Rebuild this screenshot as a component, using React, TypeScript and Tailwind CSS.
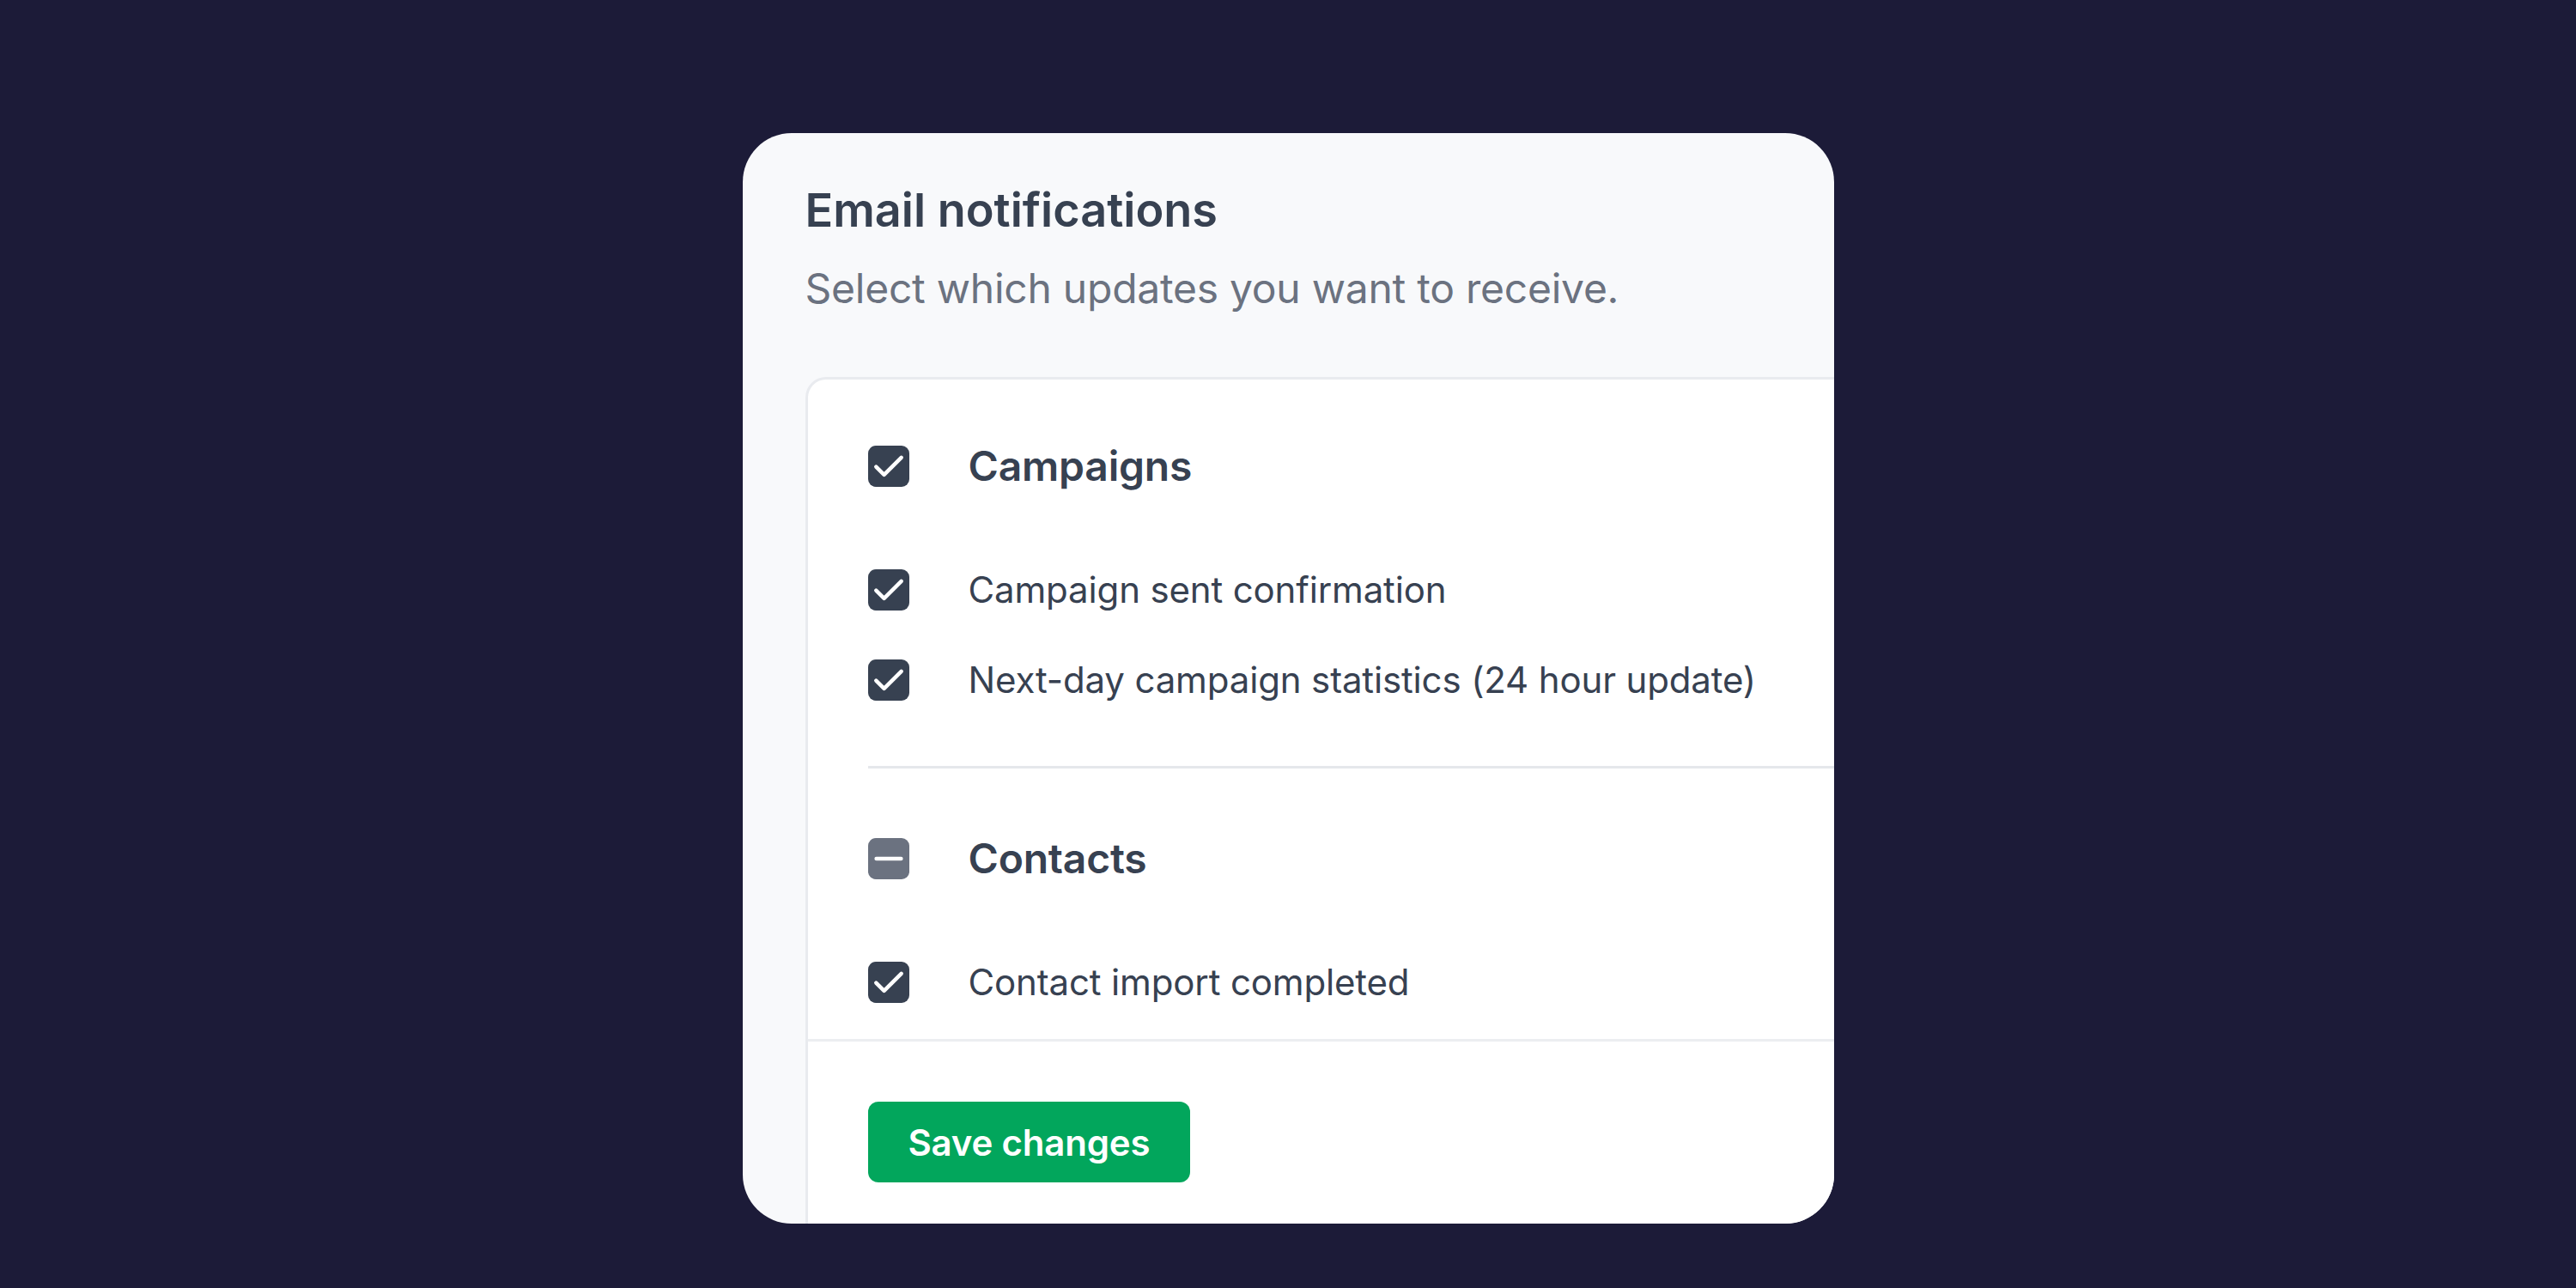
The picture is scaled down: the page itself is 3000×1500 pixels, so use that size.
import React from 'react';

type Item = { label: string; checked: boolean };
type Group = { title: string; state: 'checked' | 'mixed'; items: Item[] };

const groups: Group[] = [
  {
    title: 'Campaigns',
    state: 'checked',
    items: [
      { label: 'Campaign sent confirmation', checked: true },
      { label: 'Next-day campaign statistics (24 hour update)', checked: true },
    ],
  },
  {
    title: 'Contacts',
    state: 'mixed',
    items: [{ label: 'Contact import completed', checked: true }],
  },
];

function Box({ state }: { state: 'checked' | 'mixed' }) {
  if (state === 'mixed') {
    return (
      <span className="flex h-[48px] w-[48px] shrink-0 items-center justify-center rounded-[9px] bg-[#6b7280]">
        <svg viewBox="0 0 16 16" className="h-[48px] w-[48px]" fill="none">
          <path d="M3.2 8H12.8" stroke="white" strokeWidth="1.5" strokeLinecap="round" />
        </svg>
      </span>
    );
  }
  return (
    <span className="flex h-[48px] w-[48px] shrink-0 items-center justify-center rounded-[9px] bg-[#374151]">
      <svg viewBox="0 0 16 16" className="h-[48px] w-[48px]" fill="none">
        <path
          d="M3.1 8.2L6.2 11.3L12.9 4.6"
          stroke="white"
          strokeWidth="1.5"
          strokeLinecap="round"
          strokeLinejoin="round"
        />
      </svg>
    </span>
  );
}

function Row({ state, label, head }: { state: 'checked' | 'mixed'; label: string; head?: boolean }) {
  return (
    <div className="flex h-[48px] items-center">
      <Box state={state} />
      <span
        className={
          head
            ? 'ml-[69px] whitespace-nowrap text-[48px] font-semibold leading-[72px] tracking-[-0.2px] text-[#374151]'
            : 'ml-[69px] whitespace-nowrap text-[42px] font-normal leading-[60px] tracking-[-0.15px] text-[#374151]'
        }
      >
        {label}
      </span>
    </div>
  );
}

export default function App() {
  return (
    <div
      className="flex min-h-screen justify-center bg-[#1c1b38] pt-[155px]"
      style={{ fontFamily: 'Inter, "Noto Sans", sans-serif' }}
    >
      <div className="flex h-[1270px] w-[1271px] flex-col overflow-hidden rounded-[57px] bg-[#f8f9fb] pl-[73px] pt-[48px]">
        <h2 className="text-[54px] font-semibold leading-[84px] text-[#374151]">Email notifications</h2>
        <p className="mt-[13px] text-[48px] leading-[72px] tracking-[-0.25px] text-[#6b7280]">
          Select which updates you want to receive.
        </p>

        <div className="mt-[67px] flex w-[1400px] flex-1 flex-col rounded-tl-[24px] border-l-[3px] border-t-[3px] border-[#e9ebef] bg-white">
          <div className="h-[768px] shrink-0 overflow-hidden pl-[70px] pt-[77px]">
            <Row state={groups[0].state} label={groups[0].title} head />
            <div className="mt-[96px] flex flex-col gap-[57px]">
              {groups[0].items.map((it) => (
                <Row key={it.label} state="checked" label={it.label} />
              ))}
            </div>
            <div className="mt-[76px] h-[3px] bg-[#e5e7eb]" />
            <div className="mt-[81px]">
              <Row state={groups[1].state} label={groups[1].title} head />
            </div>
            <div className="mt-[96px] flex flex-col gap-[57px]">
              {groups[1].items.map((it) => (
                <Row key={it.label} state="checked" label={it.label} />
              ))}
            </div>
          </div>
          <div className="flex-1 border-t-[3px] border-[#eceef1] pl-[70px] pt-[70px]">
            <button className="flex h-[94px] items-center rounded-[12px] bg-[#02a65c] px-[47px] text-[42px] font-semibold tracking-[-0.2px] text-white">
              Save changes
            </button>
          </div>
        </div>
      </div>
    </div>
  );
}
